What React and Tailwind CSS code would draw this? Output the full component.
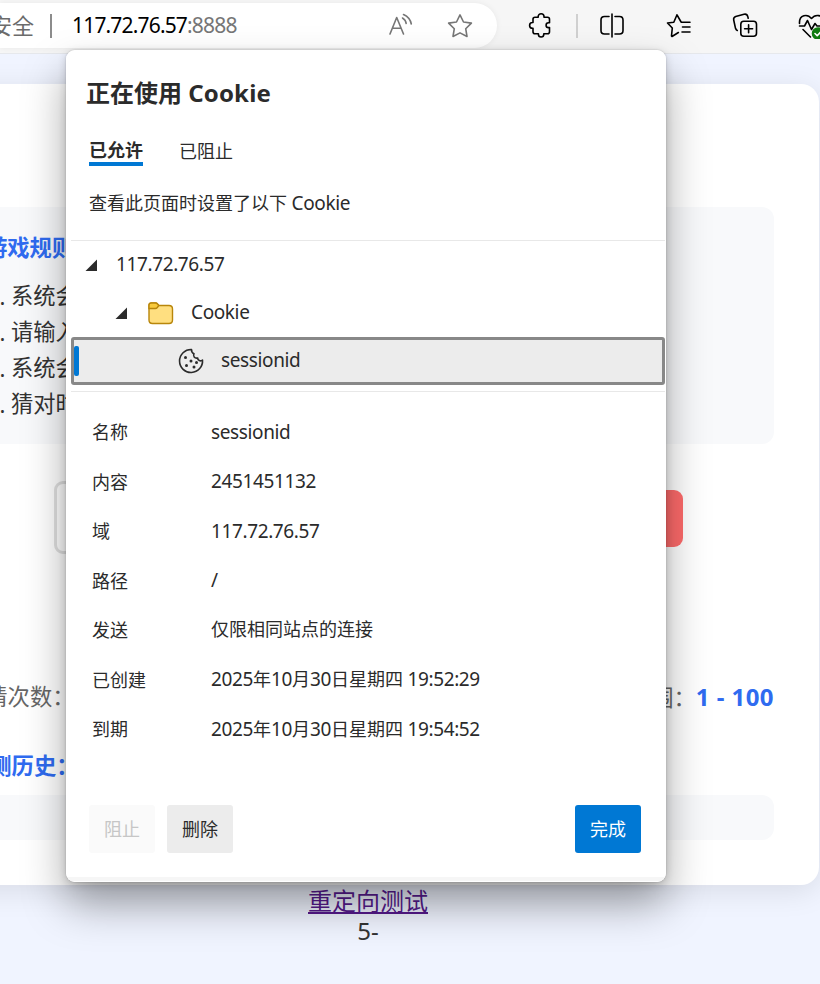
import React, { useState } from "react";

const rules = ["系统会随机生成数字", "请输入您猜测的数字", "系统会提示大小", "猜对时游戏结束"];

const details = [
  { label: "名称", value: "sessionid" },
  { label: "内容", value: "2451451132" },
  { label: "域", value: "117.72.76.57" },
  { label: "路径", value: "/" },
  { label: "发送", value: "仅限相同站点的连接" },
  { label: "已创建", value: "2025年10月30日星期四 19:52:29" },
  { label: "到期", value: "2025年10月30日星期四 19:54:52" },
];

// latin runs are set slightly larger than the chinese text around them
const Mixed = ({ text }) =>
  text.split(/([\x20-\x7e]+)/).map((part, i) =>
    i % 2 ? (
      <span key={i} className="text-[19px] tracking-[-0.38px]">
        {part}
      </span>
    ) : (
      part
    )
  );

const Icon = ({ children, className = "", size = 26 }) => (
  <svg
    width={size}
    height={size}
    viewBox={`0 0 ${size} ${size}`}
    fill="none"
    stroke="currentColor"
    strokeWidth="1.6"
    strokeLinecap="round"
    strokeLinejoin="round"
    className={`shrink-0 ${className}`}
  >
    {children}
  </svg>
);

const Toolbar = () => (
  <div className="flex h-[54px] items-start border-b border-[#e6e8ec] bg-[#f6f6f6] pt-[3px]">
    <div className="flex h-[45px] w-[497px] shrink-0 items-center rounded-r-full bg-white shadow-[0_0_6px_rgba(0,0,0,0.06)]">
      <span className="-ml-[10px] text-[22px] text-[#6b6b6b]">安全</span>
      <span className="ml-[16px] h-6 w-[2px] bg-[#8c8c8c]" />
      <span className="ml-[20px] w-[316px] text-[21px] tracking-[-0.83px] text-black">
        117.72.76.57<span className="text-[#767676]">:8888</span>
      </span>
      <Icon className="text-[#767676]">
        <path d="M2 21 8.700 4.500 15.500 21M4.500 15.200h8.500M14.500 5c2.200 1.300 3.300 3 3.700 5.500M15.500 1.500c4.400 2 7 5 7.800 9.500" />
      </Icon>
      <Icon className="ml-[33px] text-[#767676]">
        <path d="M13 1.900 16.500 9l7.900 1.100-5.700 5.600 1.300 7.800-7-3.600-7 3.600 1.300-7.800L1.600 10.100 9.500 9z" />
      </Icon>
    </div>
    <div className="flex h-[45px] shrink-0 items-center text-black">
      <Icon className="mb-[2px] ml-[31px]">
        <path d="M5 7.200Q5 5.200 7 5.200h3.200V4.600a2.900 2.900 0 0 1 5.800 0v.6h3.500q2 0 2 2v3.600h-1a2.400 2.400 0 0 0 0 4.800h1v4.200q0 2-2 2h-3.700v.500a2.700 2.700 0 0 1-5.400 0v-.500H7q-2 0-2-2v-3.500h-.500a2.900 2.900 0 0 1 0-5.800H5z" />
      </Icon>
      <span className="ml-[22px] h-6 w-[2px] bg-[#d0d0d0]" />
      <Icon className="ml-[21px]">
        <path d="M13 1v23M10 3.500H5.500Q2 3.500 2 7v10.500Q2 21 5.500 21H10M16 3.500h4.500Q24 3.500 24 7v10.500q0 3.500-3.500 3.500H16" />
      </Icon>
      <Icon className="ml-[41px]">
        <path d="M14.500 8 11 1.800 7.800 9.200 1.500 10l4.800 5-.8 8q.2.600.9.200l6-3.700M14.500 8l.8 1.200H24M16.500 14H24M16 19h8" />
      </Icon>
      <Icon className="mb-[2px] ml-[40px]">
        <rect x="8.800" y="9.300" width="15.700" height="15" rx="3" />
        <path d="M16.600 12.800v8M12.600 16.800h8M5.300 18.500c-1-.4-1.500-1.200-1.800-2.200L1.700 8q-.5-2.500 2-3.400L12 2.300q3-.7 3.800 2.300l.4 1.700" />
      </Icon>
      <Icon className="ml-[40px]">
        <path d="M1.500 10.500C1 1.500 9.500.5 13.500 5.500 17.500.5 25 2 25.500 8M1.500 13h5l3-5.500 4 9 3.500-6 2 2.500h6M5 16.500l7.500 7.500" />
        <circle cx="20" cy="20.500" r="5.500" fill="#107c10" stroke="#107c10" />
        <path d="m17 20.500 2.200 2.200 4-4.200" stroke="#fff" />
      </Icon>
    </div>
  </div>
);

const GamePage = () => (
  <div className="-ml-[83px] h-[930px] w-[902px] pt-[30px] text-[22.3px]">
    <div className="h-[801px] rounded-[18px] bg-white px-[45px] pt-[123px] shadow-[0_6px_30px_rgba(0,0,0,0.1)]">
      <div className="h-[237px] rounded-[12px] bg-[#f8f9fb] pl-[23px] pt-[24px]">
        <h3 className="h-[47px] font-bold leading-[34px] text-[#2f6bf0]">游戏规则：</h3>
        <ol>
          {rules.map((rule, i) => (
            <li key={i} className="flex h-9 items-center leading-9 text-[#333]">
              <span className="w-[26px] pl-[2px] text-[22px]">{i + 1}.</span>
              {rule}
            </li>
          ))}
        </ol>
      </div>
      <div className="mt-[37px] flex h-[73px] items-center pl-[92px]">
        <input
          className="h-[73px] w-[330px] rounded-[9px] border-[3px] border-[#e0e0e0] bg-white outline-none"
          aria-label="guess"
        />
        <button className="ml-[150px] mt-px h-[57px] w-[149px] rounded-[9px] bg-[#ff6b6b]" aria-label="reset" />
      </div>
      <div className="mt-[126px] flex h-[34px] items-center justify-between text-[#666]">
        <span className="pl-px">已猜次数：</span>
        <span>
          范围：<b className="text-[24px] tracking-[0.45px] text-[#2f6bf0]">1 - 100</b>
        </span>
      </div>
      <h3 className="mt-[35px] h-[34px] pl-[5px] font-bold leading-[34px] text-[#2f6bf0]">猜测历史：</h3>
      <div className="mt-[12px] h-[45px] rounded-[12px] bg-[#f8f9fb]" />
    </div>
    <div className="text-center text-[24px] leading-[31px] text-[#333]">
      <a href="#" className="text-[#551a8b] underline decoration-2 underline-offset-2">
        重定向测试
      </a>
      <p className="leading-[30px]">5-</p>
    </div>
  </div>
);

const Arrow = () => (
  <svg width="13" height="13" className="mr-px shrink-0">
    <path d="M12 0.500V12H0.500z" fill="#2b2b2b" />
  </svg>
);

const CookieDialog = () => {
  const [tab, setTab] = useState("allowed");

  return (
    <div className="absolute left-[66px] top-[50px] flex h-[832px] w-[600px] flex-col overflow-hidden rounded-[9px] bg-white text-[18px] text-[#2b2b2b]">
      <h2 className="pl-[20px] pt-[25px] text-[24px] font-bold leading-9">
        正在使用 <span className="tracking-[0.15px]">Cookie</span>
      </h2>
      <div className="flex pl-[23px] pt-[23px]">
        <button
          onClick={() => setTab("allowed")}
          className={`h-8 leading-[32px] ${tab === "allowed" ? "border-b-4 border-[#0078d4] font-bold" : ""}`}
        >
          已允许
        </button>
        <button
          onClick={() => setTab("blocked")}
          className={`ml-9 h-8 leading-[35px] ${tab === "blocked" ? "border-b-4 border-[#0078d4] font-bold" : ""}`}
        >
          已阻止
        </button>
      </div>
      <p className="pl-[23px] pt-[23px] leading-7">
        <Mixed text="查看此页面时设置了以下 Cookie" />
      </p>

      <div className="ml-[5px] mr-px mt-[23px] h-[152px] border-y border-[#e8e8e8]">
        <div className="flex h-12 items-center pl-[14px]">
          <Arrow />
          <span className="ml-[17px] pb-[2px]">
            <Mixed text="117.72.76.57" />
          </span>
        </div>
        <div className="flex h-12 items-center pl-[44px]">
          <Arrow />
          <svg width="26" height="24" className="ml-[19px]" fill="#ffdf80" stroke="#b8860b" strokeWidth="1.400">
            <path d="M1 4.500Q1 2 3.500 2h4q1.200 0 2 1l1.300 1.500H21q3.500 0 3.500 3.500v11q0 3.500-3.500 3.500H4.500Q1 22.500 1 19z" />
            <path d="M1 7.500v-3Q1 2 3.500 2h4q1.200 0 2 1l1.300 1.500-1.500 2q-.8 1-2 1z" fill="#f8ca3c" />
          </svg>
          <span className="ml-[17px] pb-[2px]">
            <Mixed text="Cookie" />
          </span>
        </div>
        <div className="flex h-12 items-center rounded-[3px] border-[3px] border-[#888] bg-[#ececec]">
          <span className="h-[30px] w-[5px] rounded-[2px] bg-[#0078d4]" />
          <Icon className="ml-[99px]">
            <path d="M13.500 1.500A11.500 11.500 0 1 0 24.500 12c-2 1.700-5 .5-4.800-2-3.200.6-5-2-3.700-4.300-1.700-.7-2.600-2-2.500-4.200z" />
            <g fill="currentColor" stroke="none">
              <circle cx="7.500" cy="9.500" r="1.500" />
              <circle cx="13" cy="13" r="1.500" />
              <circle cx="8.500" cy="17.500" r="1.500" />
              <circle cx="16" cy="19" r="1.500" />
              <circle cx="18.500" cy="14.500" r="1.500" />
            </g>
          </Icon>
          <span className="ml-[17px] pb-[2px]">
            <Mixed text="sessionid" />
          </span>
        </div>
      </div>

      <dl className="pt-[16px]">
        {details.map((item) => (
          <div key={item.label} className="flex h-[49.5px] items-center pl-[26px]">
            <dt className="w-[119px]">{item.label}</dt>
            <dd className="pb-[2px]">
              <Mixed text={item.value} />
            </dd>
          </div>
        ))}
      </dl>

      <div className="mt-auto flex h-[72px] gap-3 pl-[23px] pr-[25px]">
        <button disabled className="h-12 w-[66px] rounded-[3px] bg-[#fafafa] text-[#c6c6c6]">
          阻止
        </button>
        <button className="h-12 w-[66px] rounded-[3px] bg-[#ececec]">删除</button>
        <button className="ml-auto h-12 w-[66px] rounded-[3px] bg-[#0078d4] text-white">完成</button>
      </div>
      <div className="mb-px ml-[2px] mr-px h-1 shrink-0 bg-[#f6f6f6]" />
    </div>
  );
};

const App = () => {
  return (
    <div className="relative h-[984px] w-[820px] overflow-hidden bg-[#f0f4ff] font-['Noto_Sans','Noto_Sans_CJK_SC',sans-serif]">
      <Toolbar />
      <GamePage />
      <div className="absolute left-[66px] top-[50px] h-[832px] w-[600px] rounded-[9px] shadow-[0_23px_43px_rgba(0,0,0,0.34),0_2px_8px_rgba(0,0,0,0.16),0_0_2px_rgba(0,0,0,0.2)]" />
      <CookieDialog />
    </div>
  );
};

export default App;
